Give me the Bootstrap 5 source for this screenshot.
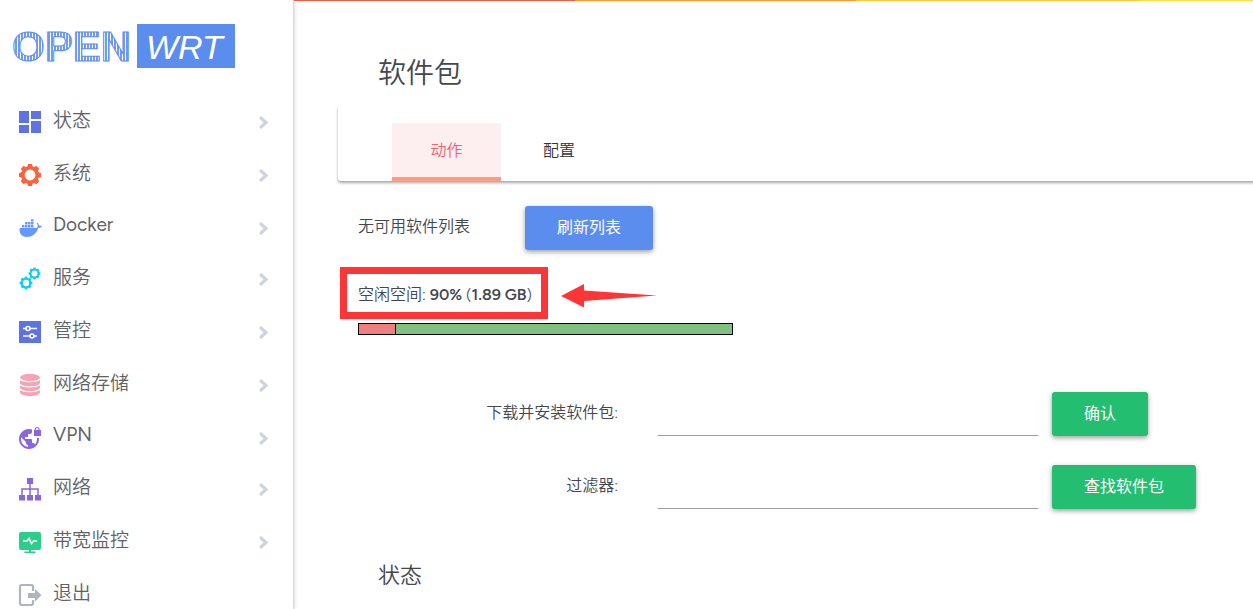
<!DOCTYPE html>
<html lang="zh-CN">
<head>
<meta charset="utf-8">
<meta name="viewport" content="width=device-width, initial-scale=1">
<title>OpenWrt - 软件包</title>
<link href="https://cdn.jsdelivr.net/npm/bootstrap@5.3.0/dist/css/bootstrap.min.css" rel="stylesheet">
<style>
  body { font-family: Figtree, Lato, "Noto Sans CJK SC", sans-serif; font-weight: 350; font-size: 16px; line-height: 24px; color: #43484f; background: #fff; }
  .shell { height: 100vh; overflow: hidden; }
  .sidebar { width: 294px; border-right: 1px solid #d8d8d8; box-shadow: 1px 0 4px rgba(0,0,0,.14); }
  .brand { padding: 22px 12px 0; height: 95px; }
  .menu-item { height: 53px; padding: 15px 22px 0 18px; color: #5f6368; font-size: 19px; }
  .menu-latin { height: 51px; }
  .menu-label { margin-left: 11px; line-height: 22px; }
  .menu-latin .menu-label { line-height: 18px; font-weight: 400; }
  .menu-icon { width: 24px; height: 24px; }
  .menu-arrow { width: 14px; height: 24px; }
  .page-area { overflow: hidden; }
  .strip { height: 1px; background: linear-gradient(90deg, #e8604c 29.3%, #ff9a2e 29.3% 58.6%, #ffcb3d 58.6% 88%, #f7e14b 88%); }
  .page-body { padding-left: 44px; }
  .page-title { padding: 50px 0 0 40px; font-size: 28px; line-height: 44px; font-weight: 350; margin: 0; }
  .tab-card { margin-top: 10px; padding: 18px 0 0 54px; box-shadow: 0 2px 3px rgba(0,0,0,.35); border-radius: 3px; margin-right: -4px; clip-path: inset(0 0 -8px -4px); }
  .tab-link { width: 109px; height: 58px; line-height: 56px; color: #333; text-align: center; text-decoration: none; border-bottom: 4px solid transparent; }
  .tab-link.active { color: #f0646e; background: #fdefef; border-color: #ff9b84; }
  .tab-link + .tab-link { width: 116px; }
  .content-area { padding: 25px 20px 0; }
  .btn-raised { height: 44px; padding: 0 32px; border: 0; border-radius: 3px; color: #fff; box-shadow: 0 2px 5px rgba(0,0,0,.38); font-weight: 400; line-height: 42px; }
  .btn-refresh, .btn-refresh:hover { background: #5b8def; color: #fff; margin-left: 52px; }
  .btn-go, .btn-go:hover { background: #23be70; color: #fff; margin-left: 14px; }
  .list-state { width: 115px; padding-bottom: 2px; }
  .space-line { margin-top: 33px; }
  .space-line strong { font-weight: 600; }
  .highlight-box { left: -18px; top: -16px; width: 208px; height: 52px; border: 7px solid #fc3636; }
  .pointer { left: 203px; top: 1px; width: 96px; height: 24px; }
  .usage { width: 375px; max-width: 100%; height: 12px; margin-top: 16px; border: 1px solid #000; background: #80c080; }
  .usage-used { background: #f08080; border-right: 1px solid #000; }
  .pkg-form { margin-top: 57px; }
  .form-line { height: 44px; margin-bottom: 29px; }
  .form-name { flex: 0 0 260px; text-align: right; margin-right: 40px; padding-bottom: 2px; }
  .line-input { flex: 0 1 380px; min-width: 80px; height: 44px; border: 0; border-bottom: 1px solid #9e9e9e; background: transparent; outline: 0; }
  .section-title { padding-left: 20px; margin-top: 52px; font-size: 22px; line-height: 30px; font-weight: 350; }
</style>
</head>
<body>
<svg width="0" height="0" class="position-absolute" aria-hidden="true">
  <symbol id="arrow" viewBox="0 0 14 24"><path d="M4 8l5 4.500L4 17" fill="none" stroke="#ced4da" stroke-width="3.200" stroke-linecap="round"/></symbol>
  <symbol id="gear" viewBox="0 0 24 24"><g fill="currentColor"><path fill-rule="evenodd" d="M12 3a9 9 0 1 0 0 18 9 9 0 0 0 0-18zm0 3.600a5.400 5.400 0 1 1 0 10.800 5.400 5.400 0 0 1 0-10.800z"/><path id="teeth" d="M10 1h4l1 4H9zM10 23h4l1-4H9zM1 10v4l4 1V9zM23 10v4l-4 1V9z"/><use href="#teeth" transform="rotate(45 12 12)"/></g></symbol>
</svg>
<div class="shell d-flex">
  <aside class="sidebar flex-shrink-0">
    <a class="brand d-block" href="#" aria-label="OpenWrt">
      <svg width="224" height="48" viewBox="0 0 224 48">
        <defs><pattern id="lines" width="3" height="3" patternUnits="userSpaceOnUse"><rect width="3" height="3" fill="#fff"/><rect width="2" height="3" fill="#6f9cf0"/></pattern></defs>
        <text x="0" y="39" font-family="Liberation Sans, sans-serif" font-weight="700" font-size="42" fill="url(#lines)" stroke="#5b8def" stroke-width="1">OPEN</text>
        <rect x="125" y="2" width="98" height="44" fill="#5b8def"/>
        <text x="134" y="37" font-family="Liberation Sans, sans-serif" font-style="italic" font-size="34" fill="#fff">WRT</text>
      </svg>
    </a>
    <nav>
      <a href="#" class="menu-item d-flex align-items-start text-decoration-none"><svg class="menu-icon" viewBox="0 0 24 24"><path fill="#5e72e4" d="M1 1h10v12H1zm12 0h10v8H13zM1 15h10v8H1zm12-4h10v12H13z"/></svg><span class="menu-label">状态</span><svg class="menu-arrow ms-auto"><use href="#arrow"/></svg></a>
      <a href="#" class="menu-item d-flex align-items-start text-decoration-none"><svg class="menu-icon" style="color:#fb6340"><use href="#gear"/></svg><span class="menu-label">系统</span><svg class="menu-arrow ms-auto"><use href="#arrow"/></svg></a>
      <a href="#" class="menu-item menu-latin d-flex align-items-start text-decoration-none"><svg class="menu-icon" viewBox="0 0 24 24"><path fill="#6699ff" d="M2 12h17c1-.5 1-3.500-.5-4.500l.8-.7c1 .7 1.500 1.800 1.600 2.700 1-.2 2.400 0 3.100.6-.6 1.400-2 2-3.600 1.900C18 18 14 21 9 21c-5 0-7.500-3-7.500-8zM4 9h2.500v2.400H4zm3 0h2.500v2.400H7zm3 0h2.500v2.400H10zm3 0h2.500v2.400H13zM7 6.100h2.500v2.400H7zm3 0h2.500v2.400H10zm3 0h2.500v2.400H13zM13 3.200h2.500v2.400H13z"/></svg><span class="menu-label">Docker</span><svg class="menu-arrow ms-auto"><use href="#arrow"/></svg></a>
      <a href="#" class="menu-item d-flex align-items-start text-decoration-none"><svg class="menu-icon" viewBox="0 0 24 24" style="color:#11cdef"><use href="#gear" x="1" y="9" width="14" height="14"/><use href="#gear" x="10" y="0" width="13" height="13"/></svg><span class="menu-label">服务</span><svg class="menu-arrow ms-auto"><use href="#arrow"/></svg></a>
      <a href="#" class="menu-item d-flex align-items-start text-decoration-none"><svg class="menu-icon" viewBox="0 0 24 24"><path fill="#5e72e4" d="M1 1h22v22H1z"/><g fill="#5e72e4" stroke="#fff" stroke-width="1.600"><path d="M5 8.500h14M5 16h14"/><circle cx="10" cy="8.500" r="2"/><circle cx="14" cy="16" r="2"/></g></svg><span class="menu-label">管控</span><svg class="menu-arrow ms-auto"><use href="#arrow"/></svg></a>
      <a href="#" class="menu-item d-flex align-items-start text-decoration-none"><svg class="menu-icon" viewBox="0 0 24 24" fill="#f3a4b5"><ellipse cx="12" cy="4.500" rx="10" ry="3.700"/><path d="M2 7c3 3 17 3 20 0v3c-1 4.500-19 4.500-20 0zM2 12.200c3 3 17 3 20 0v2.500c-1 4.500-19 4.500-20 0zM2 17c3 3 17 3 20 0v2.500c-1 4.800-19 4.800-20 0z"/></svg><span class="menu-label">网络存储</span><svg class="menu-arrow ms-auto"><use href="#arrow"/></svg></a>
      <a href="#" class="menu-item menu-latin d-flex align-items-start text-decoration-none"><svg class="menu-icon" viewBox="0 0 24 24" fill="#8965e0"><path d="M22 4h-.4V3.500a2.500 2.500 0 0 0-5 0V4H16v6h7V4zm-4.300 0v-.5a1.400 1.400 0 0 1 2.800 0V4zM18.900 12c.1.300.1.700.1 1 0 2-.8 4-2.100 5.400-.3-.8-1-1.400-1.900-1.400h-1v-3c0-.6-.4-1-1-1H7v-2h2c.6 0 1-.4 1-1V8h2c1.100 0 2-.9 2-2V3.500C13 3.200 12 3 11 3 5.500 3 1 7.500 1 13s4.500 10 10 10 10-4.500 10-10v-1zM10 20.900C6 20.400 3 17.100 3 13c0-.6.100-1.200.2-1.800L8 16v1c0 1.100.9 2 2 2z"/></svg><span class="menu-label">VPN</span><svg class="menu-arrow ms-auto"><use href="#arrow"/></svg></a>
      <a href="#" class="menu-item d-flex align-items-start text-decoration-none"><svg class="menu-icon" viewBox="0 0 24 24"><path fill="#8965e0" d="M9 1h6v6H9zM1 18h6v5.500H1zm8 0h6v5.500H9zm8 0h6v5.500h-6z"/><path fill="none" stroke="#8965e0" stroke-width="1.500" d="M12 6v12M4 18v-6h16v6"/></svg><span class="menu-label">网络</span><svg class="menu-arrow ms-auto"><use href="#arrow"/></svg></a>
      <a href="#" class="menu-item d-flex align-items-start text-decoration-none"><svg class="menu-icon" viewBox="0 0 24 24"><path fill="#2dce89" d="M3 2h18q2 0 2 2v14q0 2-2 2h-8v1.500h4.500V23h-11v-1.500H11V20H3q-2 0-2-2V4q0-2 2-2z"/><path fill="none" stroke="#fff" stroke-width="1.600" d="M5 11h4l2-2.500 2.500 5L15.500 11H19"/></svg><span class="menu-label">带宽监控</span><svg class="menu-arrow ms-auto"><use href="#arrow"/></svg></a>
      <a href="#" class="menu-item d-flex align-items-start text-decoration-none"><svg class="menu-icon" viewBox="0 0 24 24"><path fill="none" stroke="#adb5bd" stroke-width="2.200" d="M15 8V4q0-2-2-2H4Q2 2 2 4v16q0 2 2 2h9q2 0 2-2v-3"/><path fill="#adb5bd" d="M10 10h7V6l6.500 6.300L17 18.500V15h-7z"/></svg><span class="menu-label">退出</span></a>
    </nav>
  </aside>
  <main class="page-area flex-grow-1">
    <div class="strip"></div>
    <div class="page-body">
      <h2 class="page-title">软件包</h2>
      <nav class="tab-card d-flex">
        <a href="#" class="tab-link active">动作</a>
        <a href="#" class="tab-link">配置</a>
      </nav>
      <section class="content-area">
        <div class="d-flex align-items-center">
          <span class="list-state">无可用软件列表</span>
          <button type="button" class="btn btn-raised btn-refresh">刷新列表</button>
        </div>
        <div class="space-line position-relative">空闲空间: <strong>90%</strong> (<strong>1.89 GB</strong>)
          <span class="highlight-box position-absolute"></span>
          <svg class="pointer position-absolute" viewBox="0 0 96 24"><path fill="#fc3636" d="M0 12 23 0v6.500L96 11.500 23 17v6.500z"/></svg>
        </div>
        <div class="usage"><div class="usage-used h-100" style="width:10%"></div></div>
        <form class="pkg-form">
          <div class="form-line d-flex align-items-center">
            <label class="form-name" for="pkg-name">下载并安装软件包:</label>
            <input class="line-input" type="text" id="pkg-name">
            <button type="button" class="btn btn-raised btn-go">确认</button>
          </div>
          <div class="form-line d-flex align-items-center">
            <label class="form-name" for="pkg-filter">过滤器:</label>
            <input class="line-input" type="text" id="pkg-filter">
            <button type="button" class="btn btn-raised btn-go">查找软件包</button>
          </div>
        </form>
        <h3 class="section-title">状态</h3>
      </section>
    </div>
  </main>
</div>
<script src="https://cdn.jsdelivr.net/npm/bootstrap@5.3.0/dist/js/bootstrap.bundle.min.js"></script>
</body>
</html>
